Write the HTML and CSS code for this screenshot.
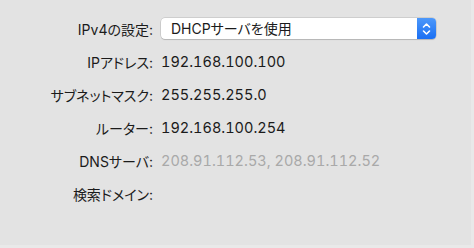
FILE: index.html
```html
<!DOCTYPE html>
<html lang="ja">
<head>
<meta charset="utf-8">
<link rel="stylesheet" href="styles.css">
</head>
<body>
<div class="panel">
  <div class="form">
    <div class="label">IPv4の設定:</div>
    <div class="value">
      <div class="popup">
        <span class="popup-text">DHCPサーバを使用</span>
        <span class="stepper">
          <svg width="9" height="14" viewBox="0 0 9 14">
            <path d="M1.5 5 L4.5 2 L7.5 5" fill="none" stroke="#fff" stroke-width="1.6" stroke-linecap="round" stroke-linejoin="round"/>
            <path d="M1.5 9 L4.5 12 L7.5 9" fill="none" stroke="#fff" stroke-width="1.6" stroke-linecap="round" stroke-linejoin="round"/>
          </svg>
        </span>
      </div>
    </div>
    <div class="label">IPアドレス:</div>
    <div class="value num">192.168.100.100</div>
    <div class="label">サブネットマスク:</div>
    <div class="value num">255.255.255.0</div>
    <div class="label">ルーター:</div>
    <div class="value num">192.168.100.254</div>
    <div class="label">DNSサーバ:</div>
    <div class="value num muted">208.91.112.53, 208.91.112.52</div>
    <div class="label">検索ドメイン:</div>
    <div class="value"></div>
  </div>
</div>
</body>
</html>
```

FILE: styles.css
```css
html, body {
  margin: 0;
  padding: 0;
}
body {
  width: 474px;
  height: 248px;
  background: #e9e9e9;
  font-family: "Inter", "Noto Sans CJK JP", sans-serif;
  font-size: 14px;
  color: #1b1b1b;
  overflow: hidden;
}
.panel {
  width: 471px;
  height: 245px;
  background: #e3e3e3;
  box-sizing: border-box;
  padding-top: 12px;
}
.form {
  display: grid;
  grid-template-columns: 153px 1fr;
  column-gap: 8px;
  grid-auto-rows: 33px;
  align-items: center;
  font-feature-settings: "palt";
}
.label {
  text-align: right;
  white-space: nowrap;
}
.value {
  white-space: nowrap;
}
.num {
  font-size: 14.5px;
  font-feature-settings: "tnum";
}
.muted {
  color: #a9a9a9;
}
.popup {
  width: 275px;
  height: 21px;
  background: #fff;
  border-radius: 4px;
  box-shadow: 0 0 0 0.5px rgba(0,0,0,0.18), 0 1px 1px rgba(0,0,0,0.12);
  display: flex;
  align-items: center;
  justify-content: space-between;
  box-sizing: border-box;
  padding-left: 10px;
}
.popup-text {
  line-height: 21px;
}
.stepper {
  width: 19px;
  height: 21px;
  border-radius: 0 4px 4px 0;
  background: linear-gradient(#4d98fa, #1a6ff3);
  display: flex;
  align-items: center;
  justify-content: center;
}
```
